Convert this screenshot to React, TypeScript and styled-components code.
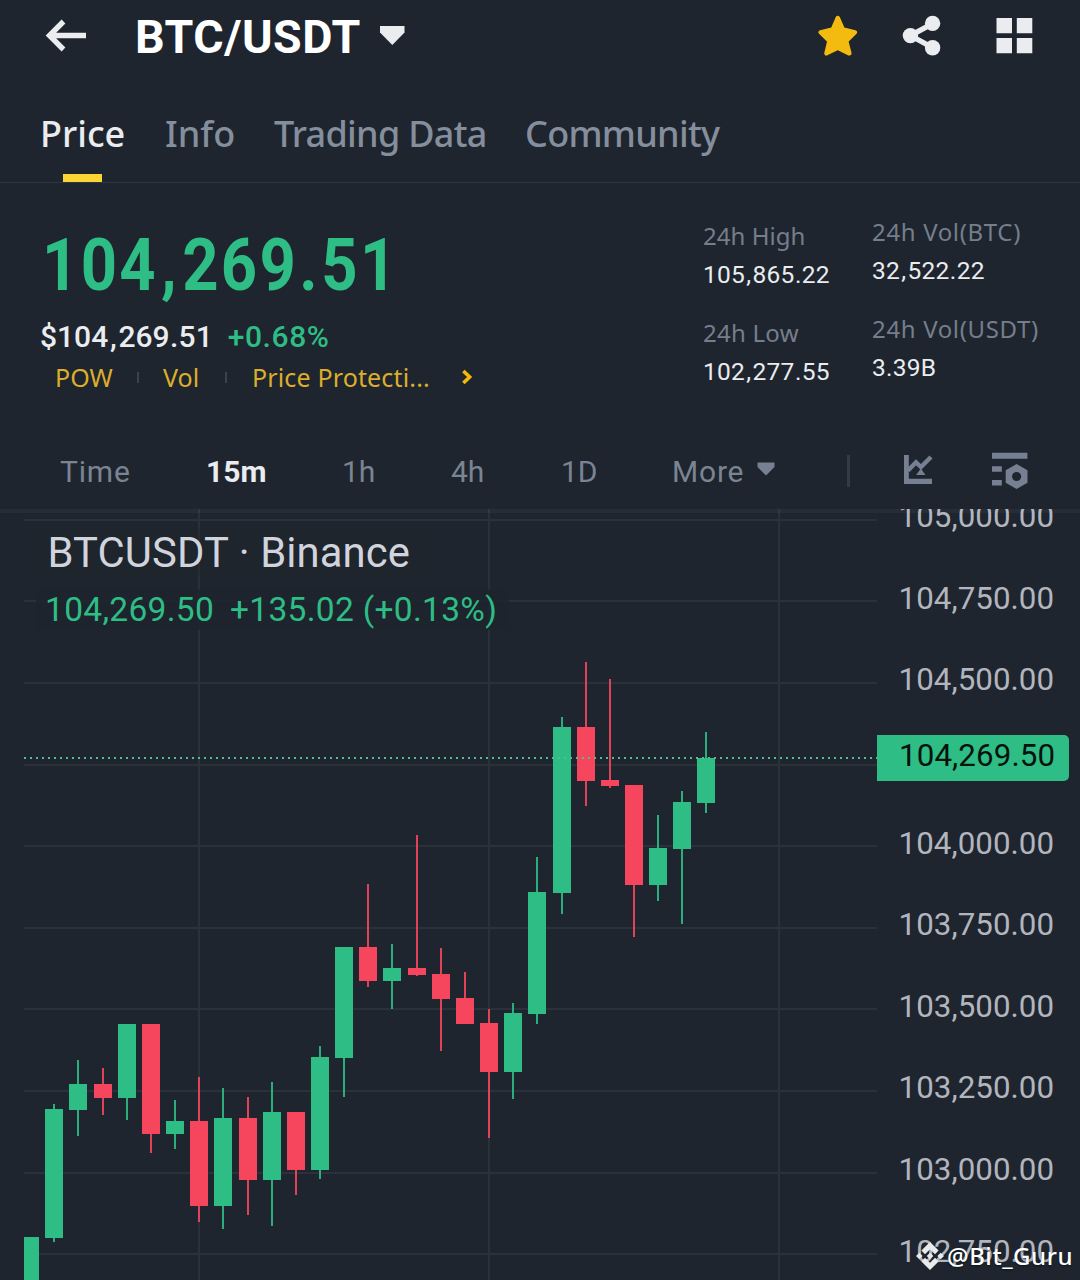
import React from "react";
import styled, { createGlobalStyle, css } from "styled-components";

const color = {
  bg: "#1e252e",
  line: "#2f3640",
  text: "#eaecef",
  muted: "#848e9c",
  icon: "#768092",
  green: "#2ebd85",
  red: "#f6465d",
  yellow: "#f0b90b",
  gold: "#dcae2c",
};

const sans = `"Noto Sans", "Open Sans", sans-serif`;
const numeric = `Roboto, "Liberation Sans", sans-serif`;

const GlobalStyle = createGlobalStyle`
  body { margin: 0; background: ${color.bg}; }
  * { box-sizing: border-box; }
`;

const Screen = styled.main`
  display: flex;
  flex-direction: column;
  width: 1080px;
  height: 1280px;
  overflow: hidden;
  background: ${color.bg};
  color: ${color.text};
  font-family: ${sans};
  white-space: nowrap;
`;

/* Header */
const Header = styled.header`
  display: flex;
  align-items: center;
  height: 72px;
  padding: 0 45px;
`;
const Pair = styled.h1`
  margin: 2px 0 0 48px;
  width: 245px;
  font: 700 46.5px/72px ${numeric};
  letter-spacing: 0.5px;
  color: #fff;
`;
const Actions = styled.div`
  display: flex;
  align-items: center;
  gap: 42px;
  margin-left: auto;
`;
const Icon = styled.svg`
  display: block;
  flex: none;
`;

/* Tabs */
const Tabs = styled.nav`
  display: flex;
  height: 111px;
  padding: 0 40px;
  border-bottom: 1px solid ${color.line};
`;
const Tab = styled.a<{ $active?: boolean; $width: number; $spacing?: number }>`
  display: flex;
  flex-direction: column;
  justify-content: space-between;
  width: ${(p) => p.$width}px;
  padding-top: 35px;
  font-size: 36px;
  line-height: 54px;
  font-weight: 500;
  letter-spacing: ${(p) => p.$spacing ?? 0}px;
  color: ${(p) => (p.$active ? color.text : color.muted)};
`;
const Indicator = styled.span`
  width: 39px;
  height: 8px;
  margin-left: 23px;
  background: #fcd535;
`;

/* Quote */
const Quote = styled.section`
  display: flex;
  height: 247px;
`;
const QuoteMain = styled.div`
  display: flex;
  flex-direction: column;
  width: 703px;
  padding: 47px 0 0 41px;
`;
const LastPrice = styled.div`
  margin-left: 1px;
  font: 700 72px/72px ${numeric};
  letter-spacing: 2.6px;
  color: ${color.green};
  transform: scaleX(0.88);
  transform-origin: left;
`;
const Sep = styled.span<{ $pad: number }>`
  margin: 0 ${(p) => p.$pad}em;
`;
const FiatRow = styled.div`
  display: flex;
  gap: 15px;
  margin: 15px 0 0 -1px;
  font: 500 30px/40px ${numeric};
`;
const Change = styled.span`
  letter-spacing: 0.6px;
  color: ${color.green};
`;
const TagRow = styled.div`
  display: flex;
  align-items: center;
  height: 40px;
  padding-left: 14px;
  font-size: 25px;
  line-height: 40px;
  color: ${color.gold};
`;
const Tag = styled.span<{ $width: number; $spacing?: number }>`
  width: ${(p) => p.$width}px;
  letter-spacing: ${(p) => p.$spacing ?? 0}px;
`;
const TagDivider = styled.i<{ $after: number }>`
  width: 2px;
  height: 11px;
  margin-right: ${(p) => p.$after}px;
  background: #3c434e;
`;

const Stats = styled.div`
  display: flex;
`;
const StatColumn = styled.div<{ $width: number; $top: number }>`
  display: flex;
  flex-direction: column;
  gap: 20px;
  width: ${(p) => p.$width}px;
  padding-top: ${(p) => p.$top}px;
`;
const Stat = styled.dl`
  margin: 0;
`;
const StatLabel = styled.dt<{ $spacing: number }>`
  font-size: 24px;
  line-height: 38px;
  letter-spacing: ${(p) => p.$spacing}px;
  color: #757e8c;
`;
const StatValue = styled.dd`
  margin: 0;
  font: 400 24.5px/39px ${numeric};
  letter-spacing: 0.25px;
`;

/* Interval bar */
const Intervals = styled.div`
  display: flex;
  align-items: center;
  height: 79px;
  padding: 5px 0 0 60px;
`;
const Interval = styled.button<{ $active?: boolean; $width: number; $spacing?: number }>`
  width: ${(p) => p.$width}px;
  padding: 0;
  border: 0;
  background: none;
  text-align: left;
  font: ${(p) => (p.$active ? 700 : 400)} 30px/44px ${numeric};
  letter-spacing: ${(p) => p.$spacing ?? 0}px;
  color: ${(p) => (p.$active ? color.text : "#7b8492")};
`;
const BarDivider = styled.i`
  width: 3px;
  height: 32px;
  margin: -3px 52px 0 72px;
  background: #343b46;
`;

/* Chart */
const Chart = styled.section`
  position: relative;
  display: flex;
  flex: 1;
  min-height: 0;
  overflow: hidden;
`;
const TopEdge = styled.div`
  position: absolute;
  top: 0;
  left: 0;
  width: 100%;
  height: 4px;
  background: rgba(255, 255, 255, 0.04);
`;
const Legend = styled.div`
  position: absolute;
  top: 20px;
  left: 36px;
  display: flex;
  flex-direction: column;
  align-items: flex-start;
  font-family: ${numeric};
`;
const legendRow = css`
  padding: 0 12px 0 11.5px;
  background: rgba(30, 37, 46, 0.4);
`;
const LegendTitle = styled.div`
  ${legendRow}
  font-size: 41.8px;
  line-height: 48px;
  letter-spacing: 0.1px;
  color: #d1d4dc;
`;
const LegendValues = styled.div`
  ${legendRow}
  display: flex;
  gap: 16px;
  margin-top: 12px;
  padding-left: 9px;
  background: rgba(30, 37, 46, 0.85);
  font-size: 33.5px;
  line-height: 41px;
  letter-spacing: 0.3px;
  color: ${color.green};
`;
const Axis = styled.div`
  display: flex;
  flex-direction: column;
  width: 203px;
  margin-top: -33px;
  font: 400 31.3px ${numeric};
  color: #b2b5be;
`;
const AxisLabel = styled.div`
  flex: none;
  height: 81.65px;
  padding-left: 21.5px;
  line-height: 81.65px;
  letter-spacing: 0.05px;
`;
const PriceTag = styled.div`
  position: absolute;
  top: 226px;
  left: 877px;
  width: 192px;
  height: 46px;
  padding-left: 22px;
  border-radius: 0 5px 5px 0;
  background: ${color.green};
  color: #06120d;
  font: 400 31.3px/41px ${numeric};
  letter-spacing: 0.1px;
`;
const Watermark = styled.div`
  position: absolute;
  left: 916px;
  bottom: 4px;
  display: flex;
  align-items: center;
  gap: 3px;
  height: 40px;
  color: #fff;
  font: 500 24px/40px ${sans};
  letter-spacing: 0.55px;
  text-shadow: 0 1px 2px rgba(0, 0, 0, 0.5);
`;

type Candle = [x: number, up: boolean, top: number, bottom: number, high: number, low: number];

const candles: Candle[] = [
  [21, true, 1237, 1290, 1237, 1290],
  [45, true, 1109, 1238, 1104, 1242],
  [69, true, 1084, 1110, 1060, 1136],
  [94, false, 1084, 1098, 1068, 1115],
  [118, true, 1024, 1098, 1024, 1120],
  [142, false, 1024, 1134, 1024, 1153],
  [166, true, 1121, 1134, 1100, 1149],
  [190, false, 1121, 1206, 1077, 1222],
  [214, true, 1118, 1206, 1088, 1229],
  [239, false, 1118, 1180, 1097, 1215],
  [263, true, 1112, 1180, 1082, 1226],
  [287, false, 1112, 1170, 1112, 1195],
  [311, true, 1057, 1170, 1046, 1179],
  [335, true, 947, 1058, 947, 1097],
  [359, false, 947, 981, 884, 987],
  [383, true, 968, 981, 944, 1009],
  [408, false, 968, 975, 835, 976],
  [432, false, 974, 999, 948, 1051],
  [456, false, 998, 1024, 972, 1024],
  [480, false, 1023, 1072, 1009, 1138],
  [504, true, 1013, 1072, 1003, 1099],
  [528, true, 892, 1014, 857, 1024],
  [553, true, 727, 893, 717, 914],
  [577, false, 727, 781, 662, 806],
  [601, false, 780, 786, 679, 788],
  [625, false, 785, 885, 785, 937],
  [649, true, 848, 885, 815, 901],
  [673, true, 802, 849, 791, 924],
  [697, true, 758, 803, 732, 813],
];
const gridRows = [519, 600, 682, 764, 845, 927, 1008, 1090, 1172, 1253];
const gridColumns = [198, 488, 778];
const axisLabels = [
  "105,000.00", "104,750.00", "104,500.00", "", "104,000.00",
  "103,750.00", "103,500.00", "103,250.00", "103,000.00", "102,750.00",
];

function Digits({ value, comma, dot }: { value: string; comma: number; dot: number }) {
  return (
    <>
      {value.split(/([,.])/).map((part, i) =>
        part === "," || part === "." ? (
          <Sep key={i} $pad={part === "," ? comma : dot}>{part}</Sep>
        ) : (
          part
        ),
      )}
    </>
  );
}

function CandleChart() {
  return (
    <Icon width="877" height="771" viewBox="0 509 877 771" shapeRendering="crispEdges">
      <defs>
        <clipPath id="plot"><rect x="24" y="509" width="853" height="771" /></clipPath>
      </defs>
      <g clipPath="url(#plot)">
        {gridRows.map((y) => <rect key={y} x="24" y={y} width="853" height="2" fill="#2a313b" />)}
        {gridColumns.map((x) => <rect key={x} x={x} y="509" width="2" height="771" fill="#2a313b" />)}
        {candles.map(([x, up, top, bottom, high, low]) => (
          <g key={x} fill={up ? color.green : color.red}>
            <rect x={x + 8} y={high} width="2" height={low - high} opacity="0.9" />
            <rect x={x} y={top} width="18" height={bottom - top} />
          </g>
        ))}
        <line x1="24" y1="758" x2="877" y2="758" stroke="#4fbf93" strokeWidth="2" strokeDasharray="2 4" />
      </g>
    </Icon>
  );
}

export default function App() {
  return (
    <Screen>
      <GlobalStyle />
      <Header>
        <Icon width="42" height="36" viewBox="45 18 42 36" fill="none" stroke={color.text} strokeWidth="5.4">
          <path d="M63.5 21.5 49.5 35.5 63.5 49.5M50 35.5H86" />
        </Icon>
        <Pair>BTC/USDT</Pair>
        <Icon width="25" height="20" viewBox="380 26 25 20" fill={color.text}>
          <path d="M380 26h24.5v6.5L392.3 45 380 32.5z" />
        </Icon>
        <Actions>
          <Icon width="42" height="44" viewBox="817 14 42 44">
            <path
              d="M837.8 18 842.8 29.3 855 32.3 846.2 41 849.4 53.4 837.8 47.8 826.4 53.4 829.4 41 820.6 32.3 832.8 29.3z"
              fill="#f3ba0f" stroke="#f3ba0f" strokeWidth="4.4" strokeLinejoin="round"
            />
          </Icon>
          <Icon width="48" height="44" viewBox="901 14 48 44" fill={color.text}>
            <path d="M932.6 23.6 910.4 35.6 932.6 47.6" fill="none" stroke={color.text} strokeWidth="5.2" />
            <circle cx="910.4" cy="35.6" r="7.7" />
            <circle cx="932.6" cy="23.4" r="7.7" />
            <circle cx="932.6" cy="47.7" r="7.7" />
          </Icon>
          <Icon width="44" height="44" viewBox="991 14 44 44" fill={color.text}>
            <path d="M996.5 18h15.5v15.3h-15.5zM1016.8 18h15.5v15.3h-15.5zM996.5 38h15.5v15.3h-15.5zM1016.8 38h15.5v15.3h-15.5z" />
          </Icon>
        </Actions>
      </Header>

      <Tabs>
        <Tab $active $width={125}>Price<Indicator /></Tab>
        <Tab $width={109}>Info</Tab>
        <Tab $width={251} $spacing={-0.7}>Trading Data</Tab>
        <Tab $width={220} $spacing={-0.7}>Community</Tab>
      </Tabs>

      <Quote>
        <QuoteMain>
          <LastPrice><Digits value="104,269.51" comma={0.05} dot={0.02} /></LastPrice>
          <FiatRow>
            <span><Digits value="$104,269.51" comma={0.06} dot={0.01} /></span>
            <Change>+0.68%</Change>
          </FiatRow>
          <TagRow>
            <Tag $width={82}>POW</Tag>
            <TagDivider $after={24} />
            <Tag $width={62}>Vol</Tag>
            <TagDivider $after={25} />
            <Tag $width={209} $spacing={0.15}>Price Protecti...</Tag>
            <Icon width="12" height="18" viewBox="461 368 12 18" fill="none" stroke={color.yellow} strokeWidth="3.6">
              <path d="M463.4 371 469.6 377 463.4 383" />
            </Icon>
          </TagRow>
        </QuoteMain>
        <Stats>
          <StatColumn $width={169} $top={34}>
            <Stat>
              <StatLabel $spacing={0.05}>24h High</StatLabel>
              <StatValue><Digits value="105,865.22" comma={0.05} dot={0.01} /></StatValue>
            </Stat>
            <Stat>
              <StatLabel $spacing={0.25}>24h Low</StatLabel>
              <StatValue><Digits value="102,277.55" comma={0.05} dot={0.01} /></StatValue>
            </Stat>
          </StatColumn>
          <StatColumn $width={208} $top={30}>
            <Stat>
              <StatLabel $spacing={0.65}>24h Vol(BTC)</StatLabel>
              <StatValue><Digits value="32,522.22" comma={0.05} dot={0.01} /></StatValue>
            </Stat>
            <Stat>
              <StatLabel $spacing={0.65}>24h Vol(USDT)</StatLabel>
              <StatValue>3.39B</StatValue>
            </Stat>
          </StatColumn>
        </Stats>
      </Quote>

      <Intervals>
        <Interval $width={146} $spacing={0.8}>Time</Interval>
        <Interval $active $width={136}>15m</Interval>
        <Interval $width={109}>1h</Interval>
        <Interval $width={110}>4h</Interval>
        <Interval $width={111}>1D</Interval>
        <Interval $width={85} $spacing={0.8}>More</Interval>
        <Icon width="18" height="20" viewBox="757.5 462 18 20" fill={color.icon}>
          <path d="M758 462.5h17v4.5L766.5 475.5 758 467z" />
        </Icon>
        <BarDivider />
        <Icon width="32" height="40" viewBox="902 452 32 40" fill={color.icon}>
          <path d="M904 455h4.8v23.8H932v5.2h-28z" />
          <path d="M908 470.5 916 462.3 921 467 931 457" fill="none" stroke={color.icon} strokeWidth="4.4" />
          <path d="M920.8 468.5 925.5 475h-9.4z" />
        </Icon>
        <Icon width="94" height="40" viewBox="934 452 94 40" fill={color.icon}>
          <path d="M992 452.7h35.4v6H992zM992 466.3h9.8v5.4H992zM992 480h9.8v5.6H992z" />
          <path
            fillRule="evenodd"
            d="M1016.6 464 1027.5 470.2V482.8L1016.6 489 1005.7 482.8V470.2zM1016.6 471.9a4.6 4.6 0 1 0 0 9.2 4.6 4.6 0 0 0 0-9.2z"
          />
        </Icon>
      </Intervals>

      <Chart>
        <CandleChart />
        <TopEdge />
        <Legend>
          <LegendTitle>BTCUSDT · Binance</LegendTitle>
          <LegendValues><span>104,269.50</span><span>+135.02 (+0.13%)</span></LegendValues>
        </Legend>
        <Axis>
          {axisLabels.map((label, i) => <AxisLabel key={i}>{label}</AxisLabel>)}
        </Axis>
        <PriceTag>104,269.50</PriceTag>
        <Watermark>
          <Icon width="28" height="28" viewBox="0 0 28 28" fill="#e9eaec">
            <path d="M14 0 22.6 8.6 19 12.2 14 7.2 9 12.2 5.4 8.6z" />
            <path d="M14 28 22.6 19.4 19 15.8 14 20.8 9 15.8 5.4 19.4z" />
            <path d="M14 10.7 17.3 14 14 17.3 10.7 14zM3.3 10.7 6.6 14 3.3 17.3 0 14zM24.7 10.7 28 14 24.7 17.3 21.4 14z" />
          </Icon>
          @Bit_Guru
        </Watermark>
      </Chart>
    </Screen>
  );
}
